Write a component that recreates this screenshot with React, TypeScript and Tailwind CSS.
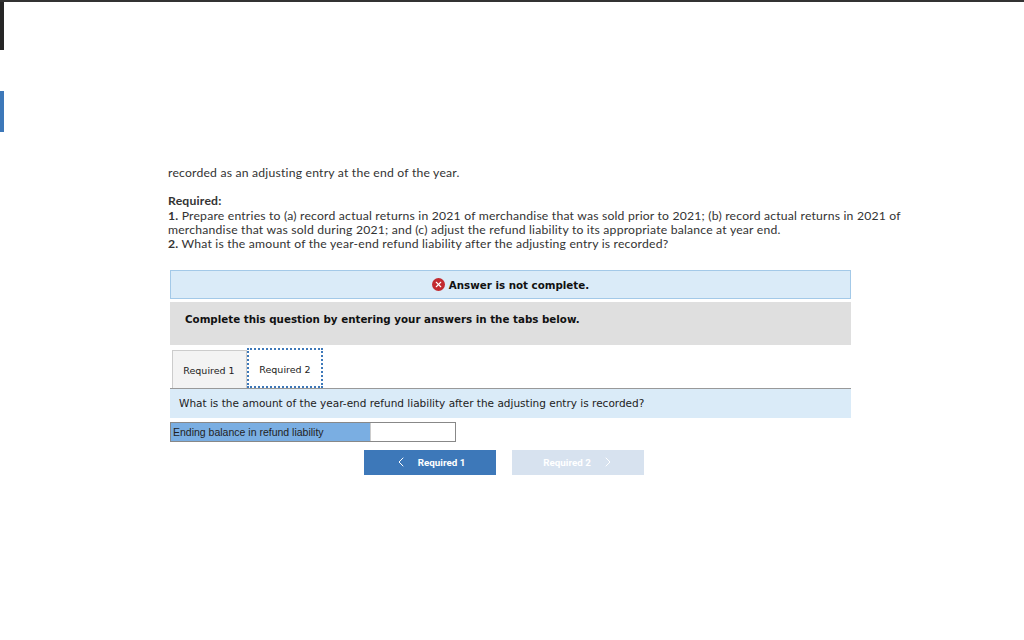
import React from 'react';
import { ChevronLeft, ChevronRight, X } from 'lucide-react';

const proxima = "font-['Lato',sans-serif]";
const verdana = "font-['DejaVu_Sans',sans-serif]";

export default function App() {
  return (
    <div className="h-[640px] w-[1024px] overflow-hidden bg-white">
      <div className="h-[2px] bg-[#333333]" />
      <div className="flex">
        <div className="w-[4px] shrink-0">
          <div className="h-[48px] bg-[#262626]" />
          <div className="mt-[41px] h-[41px] bg-[#3d78b9]" />
        </div>

        <div className="pl-[164px] pt-[164px]">
          <div className={`w-[760px] text-[12.2px] leading-[14.33px] tracking-[0.2px] text-[#333333] ${proxima}`}>
            <p>recorded as an adjusting entry at the end of the year.</p>
            <p className="mt-[14px] font-bold">Required:</p>
            <p><b>1.</b> Prepare entries to (a) record actual returns in 2021 of merchandise that was sold prior to 2021; (b) record actual returns in 2021 of merchandise that was sold during 2021; and (c) adjust the refund liability to its appropriate balance at year end.</p>
            <p><b>2.</b> What is the amount of the year-end refund liability after the adjusting entry is recorded?</p>
          </div>

          <div className={`ml-[2px] mt-[18px] w-[681px] ${verdana}`}>
            <div className="flex h-[29px] items-center justify-center gap-[4px] border border-[#a3c9e8] bg-[#daebf8] text-[10.3px] font-bold text-[#111111]">
              <span className="flex h-[13px] w-[13px] items-center justify-center rounded-full bg-[#c22a2f]">
                <X size={9} strokeWidth={3} className="text-white" />
              </span>
              <span className="pt-[3px]">Answer is not complete.</span>
            </div>

            <div className="mt-[3px] flex h-[43px] items-start bg-[#dfdfdf] pl-[15px] pt-[10px] text-[10.3px] font-bold text-[#111111]">
              Complete this question by entering your answers in the tabs below.
            </div>

            <div className="mt-[6px] flex h-[38px] items-end border-b border-[#999999] pl-[2px]">
              <div className="flex h-[38px] w-[75px] items-center justify-center border border-b-0 border-[#cccccc] bg-[#f3f3f3] pr-[1px] pt-[4px] text-[9.5px] text-[#222222]">
                Required 1
              </div>
              <div className="relative flex h-[40px] w-[76px] items-center justify-center border-2 border-dotted border-[#3d78b9] bg-white pt-[4px] text-[9.5px] text-[#222222]">
                Required 2
              </div>
            </div>

            <div className="flex h-[29px] items-center bg-[#daebf8] pl-[9px] pt-[2px] text-[10.5px] text-[#222222]">
              What is the amount of the year-end refund liability after the adjusting entry is recorded?
            </div>

            <div className="mt-[4px] flex h-[20px] w-[286px] border border-[#888888] font-['Liberation_Sans',sans-serif] text-[10.5px] text-[#222222]">
              <div className="flex w-[199px] items-center bg-[#7aaee2] pl-[2px] pt-[2px]">Ending balance in refund liability</div>
              <div className="flex-1 border-l border-[#cccccc] bg-white" />
            </div>

            <div className="ml-[194px] mt-[8px] flex gap-[16px] font-['Roboto',sans-serif] text-[9.8px] font-bold text-white">
              <div className="flex h-[25px] w-[132px] items-center justify-center gap-[9px] bg-[#3d78b9] pr-[2px]">
                <ChevronLeft size={16} strokeWidth={1.5} />
                <span className="pt-[2px]">Required 1</span>
              </div>
              <div className="flex h-[25px] w-[132px] items-center justify-center gap-[9px] bg-[#d7e2ef] pl-[3px] text-white">
                <span className="pt-[2px]">Required 2</span>
                <ChevronRight size={16} strokeWidth={1.5} />
              </div>
            </div>
          </div>
        </div>
      </div>
    </div>
  );
}
